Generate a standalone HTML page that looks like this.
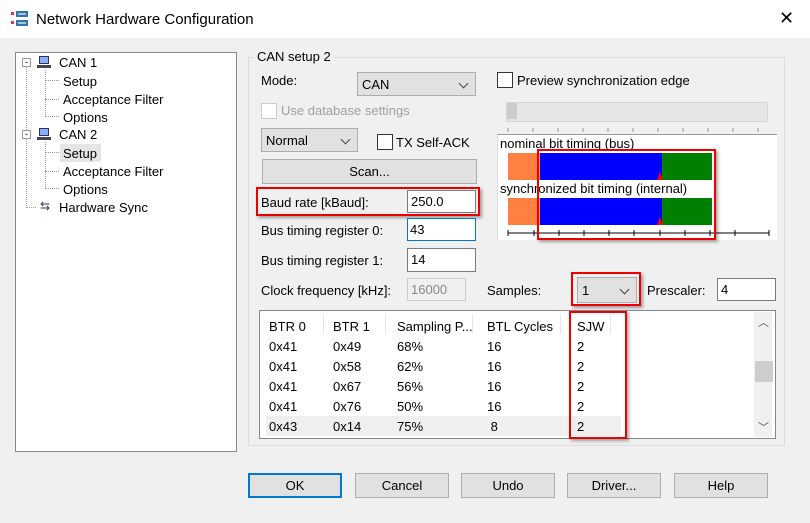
<!DOCTYPE html>
<html><head><style>
*{margin:0;padding:0;box-sizing:border-box}
body{width:810px;height:523px;background:#f0f0f0;font-family:"Liberation Sans",sans-serif;font-size:13px;color:#000;position:relative;overflow:hidden}
.a{position:absolute;white-space:nowrap}
.box{position:absolute;border:1px solid #7a7a7a;background:#fff}
.cb{position:absolute;background:#e1e1e1;border:1px solid #adadad}
.btn{position:absolute;background:#e1e1e1;border:1px solid #adadad;text-align:center;line-height:23px}
.chk{position:absolute;width:16px;height:16px;border:1px solid #333;background:#fff}
.red{position:absolute;border:2px solid #e00;box-shadow:2px 2px 3px rgba(0,0,0,.35)}
.dd{position:absolute;right:8px;top:7px;width:7px;height:7px;border-right:1px solid #444;border-bottom:1px solid #444;transform:rotate(45deg)}
.tl{position:absolute;border-left:1px dotted #999;border-bottom:1px dotted #999}
</style></head><body>
<div class="a" style="left:0;top:0;width:810px;height:38px;background:#fff"></div>
<svg class="a" style="left:10px;top:10px" width="20" height="18"><rect x="6" y="1" width="12" height="6" fill="#3a6fb0"/><rect x="6" y="10" width="12" height="6" fill="#3a6fb0"/><rect x="8" y="3" width="8" height="2" fill="#9cc"/><rect x="8" y="12" width="8" height="2" fill="#9cc"/><rect x="1" y="2" width="3" height="3" fill="#e33"/><rect x="1" y="11" width="3" height="3" fill="#e33"/></svg>
<div class="a" style="left:36px;top:11px;font-size:15px">Network Hardware Configuration</div>
<div class="a" style="left:779px;top:8px;font-size:18px">✕</div>

<div class="box" style="left:15px;top:52px;width:222px;height:400px;border-color:#828790"></div>
<div class="tl" style="left:26px;top:66px;width:1px;height:142px"></div>
<div class="tl" style="left:26px;top:207px;width:10px;height:1px;border-left:0"></div>
<div class="tl" style="left:45px;top:70px;width:14px;height:47px"></div>
<div class="tl" style="left:45px;top:80px;width:14px;height:1px;border-left:0"></div>
<div class="tl" style="left:45px;top:99px;width:14px;height:1px;border-left:0"></div>
<div class="tl" style="left:45px;top:142px;width:14px;height:47px"></div>
<div class="tl" style="left:45px;top:152px;width:14px;height:1px;border-left:0"></div>
<div class="tl" style="left:45px;top:171px;width:14px;height:1px;border-left:0"></div>
<div class="a" style="left:22px;top:58px;width:9px;height:9px;border:1px solid #999;background:#fff;font-size:9px;line-height:6px;text-align:center">-</div>
<div class="a" style="left:22px;top:130px;width:9px;height:9px;border:1px solid #999;background:#fff;font-size:9px;line-height:6px;text-align:center">-</div>
<svg class="a" style="left:36px;top:55px" width="16" height="14"><rect x="3" y="1" width="10" height="8" fill="#335" /><rect x="4" y="2" width="8" height="6" fill="#8af"/><rect x="1" y="10" width="14" height="3" fill="#445"/></svg>
<svg class="a" style="left:36px;top:127px" width="16" height="14"><rect x="3" y="1" width="10" height="8" fill="#335" /><rect x="4" y="2" width="8" height="6" fill="#8af"/><rect x="1" y="10" width="14" height="3" fill="#445"/></svg>
<div class="a" style="left:59px;top:55px">CAN 1</div>
<div class="a" style="left:63px;top:74px">Setup</div>
<div class="a" style="left:63px;top:92px">Acceptance Filter</div>
<div class="a" style="left:63px;top:110px">Options</div>
<div class="a" style="left:59px;top:127px">CAN 2</div>
<div class="a" style="left:60px;top:144px;width:41px;height:18px;background:#e5e5e5"></div>
<div class="a" style="left:63px;top:146px">Setup</div>
<div class="a" style="left:63px;top:164px">Acceptance Filter</div>
<div class="a" style="left:63px;top:182px">Options</div>
<div class="a" style="left:40px;top:199px;color:#335;font-size:12px">⇆</div>
<div class="a" style="left:59px;top:200px">Hardware Sync</div>

<div class="a" style="left:248px;top:57px;width:537px;height:389px;border:1px solid #dcdcdc"></div>
<div class="a" style="left:254px;top:49px;background:#f0f0f0;padding:0 3px">CAN setup 2</div>
<div class="a" style="left:261px;top:73px">Mode:</div>
<div class="cb" style="left:357px;top:72px;width:119px;height:24px"><span class="a" style="left:4px;top:4px">CAN</span><span class="dd"></span></div>
<div class="chk" style="left:261px;top:103px;border-color:#ccc"></div>
<div class="a" style="left:281px;top:103px;color:#a0a0a0">Use database settings</div>
<div class="cb" style="left:261px;top:128px;width:97px;height:24px"><span class="a" style="left:4px;top:4px">Normal</span><span class="dd"></span></div>
<div class="chk" style="left:377px;top:134px"></div>
<div class="a" style="left:396px;top:135px">TX Self-ACK</div>
<div class="btn" style="left:262px;top:159px;width:215px;height:25px">Scan...</div>
<div class="a" style="left:261px;top:195px">Baud rate [kBaud]:</div>
<div class="box" style="left:407px;top:190px;width:69px;height:23px"><span class="a" style="left:3px;top:3px">250.0</span></div>
<div class="red" style="left:256px;top:187px;width:224px;height:29px"></div>
<div class="a" style="left:261px;top:223px">Bus timing register 0:</div>
<div class="box" style="left:407px;top:218px;width:69px;height:23px;border-color:#0078d7"><span class="a" style="left:2px;top:3px">43</span></div>
<div class="a" style="left:261px;top:253px">Bus timing register 1:</div>
<div class="box" style="left:407px;top:248px;width:69px;height:24px"><span class="a" style="left:3px;top:3px">14</span></div>
<div class="a" style="left:261px;top:283px">Clock frequency [kHz]:</div>
<div class="box" style="left:407px;top:278px;width:59px;height:23px;background:#f0f0f0;border-color:#ccc"><span class="a" style="left:3px;top:3px;color:#888">16000</span></div>
<div class="a" style="left:487px;top:283px">Samples:</div>
<div class="cb" style="left:577px;top:277px;width:60px;height:26px"><span class="a" style="left:4px;top:5px">1</span><span class="dd" style="top:8px"></span></div>
<div class="red" style="left:571px;top:272px;width:70px;height:34px"></div>
<div class="a" style="left:647px;top:283px">Prescaler:</div>
<div class="box" style="left:717px;top:278px;width:59px;height:23px"><span class="a" style="left:3px;top:3px">4</span></div>

<div class="chk" style="left:497px;top:72px"></div>
<div class="a" style="left:517px;top:73px">Preview synchronization edge</div>
<div class="a" style="left:506px;top:102px;width:262px;height:20px;background:#e6e6e6;border:1px solid #d6d6d6"></div>
<div class="a" style="left:507px;top:103px;width:10px;height:16px;background:#ccc"></div>
<svg class="a" style="left:497px;top:126px" width="280" height="8"><g stroke="#999"><line x1="11" y1="2" x2="11" y2="6"/><line x1="36" y1="2" x2="36" y2="6"/><line x1="61" y1="2" x2="61" y2="6"/><line x1="86" y1="2" x2="86" y2="6"/><line x1="111" y1="2" x2="111" y2="6"/><line x1="136" y1="2" x2="136" y2="6"/><line x1="161" y1="2" x2="161" y2="6"/><line x1="186" y1="2" x2="186" y2="6"/><line x1="211" y1="2" x2="211" y2="6"/><line x1="236" y1="2" x2="236" y2="6"/><line x1="261" y1="2" x2="261" y2="6"/></g></svg>
<div class="a" style="left:497px;top:134px;width:280px;height:106px;background:#fff;border-top:1px solid #999;border-left:1px solid #ddd"></div>
<div class="a" style="left:500px;top:136px">nominal bit timing (bus)</div>
<div class="a" style="left:508px;top:153px;width:32px;height:27px;background:#ff8040"></div>
<div class="a" style="left:540px;top:153px;width:122px;height:27px;background:#0000ff"></div>
<div class="a" style="left:662px;top:153px;width:50px;height:27px;background:#008000"></div>
<div class="a" style="left:500px;top:181px">synchronized bit timing (internal)</div>
<div class="a" style="left:508px;top:198px;width:32px;height:27px;background:#ff8040"></div>
<div class="a" style="left:540px;top:198px;width:122px;height:27px;background:#0000ff"></div>
<div class="a" style="left:662px;top:198px;width:50px;height:27px;background:#008000"></div>
<svg class="a" style="left:497px;top:165px" width="280" height="75"><polygon points="160,15 166,15 163,7" fill="red"/><polygon points="160,60 166,60 163,52" fill="red"/><g stroke="#000"><line x1="11" y1="68" x2="272" y2="68"/><line x1="11" y1="65" x2="11" y2="71"/><line x1="37" y1="65" x2="37" y2="71"/><line x1="62" y1="65" x2="62" y2="71"/><line x1="87" y1="65" x2="87" y2="71"/><line x1="112" y1="65" x2="112" y2="71"/><line x1="137" y1="65" x2="137" y2="71"/><line x1="163" y1="65" x2="163" y2="71"/><line x1="188" y1="65" x2="188" y2="71"/><line x1="213" y1="65" x2="213" y2="71"/><line x1="238" y1="65" x2="238" y2="71"/><line x1="272" y1="65" x2="272" y2="71"/></g></svg>
<div class="red" style="left:537px;top:149px;width:179px;height:91px"></div>

<div class="box" style="left:259px;top:310px;width:517px;height:129px;border-color:#828790"></div>
<div class="a" style="left:266px;top:416px;width:355px;height:20px;background:#efefef"></div>
<div class="a" style="left:754px;top:312px;width:18px;height:125px;background:#f0f0f0"></div>
<div class="a" style="left:755px;top:361px;width:18px;height:21px;background:#cdcdcd"></div>
<div class="a" style="left:758px;top:314px;color:#555;font-size:11px">︿</div>
<div class="a" style="left:758px;top:419px;color:#555;font-size:11px">﹀</div>
<div class="a" style="left:323px;top:314px;width:1px;height:20px;background:#e5e5e5"></div>
<div class="a" style="left:385px;top:314px;width:1px;height:20px;background:#e5e5e5"></div>
<div class="a" style="left:472px;top:314px;width:1px;height:20px;background:#e5e5e5"></div>
<div class="a" style="left:560px;top:314px;width:1px;height:20px;background:#e5e5e5"></div>
<div class="a" style="left:610px;top:314px;width:1px;height:20px;background:#e5e5e5"></div>
<div class="a" style="left:269px;top:317px;line-height:20px">BTR 0<br>0x41<br>0x41<br>0x41<br>0x41<br>0x43</div>
<div class="a" style="left:333px;top:317px;line-height:20px">BTR 1<br>0x49<br>0x58<br>0x67<br>0x76<br>0x14</div>
<div class="a" style="left:397px;top:317px;line-height:20px">Sampling P...<br>68%<br>62%<br>56%<br>50%<br>75%</div>
<div class="a" style="left:487px;top:317px;line-height:20px">BTL Cycles<br>16<br>16<br>16<br>16<br>&nbsp;8</div>
<div class="a" style="left:577px;top:317px;line-height:20px">SJW<br>2<br>2<br>2<br>2<br>2</div>
<div class="red" style="left:569px;top:311px;width:58px;height:128px"></div>

<div class="btn" style="left:248px;top:473px;width:94px;height:25px;border:2px solid #0078d7;line-height:21px">OK</div>
<div class="btn" style="left:355px;top:473px;width:94px;height:25px">Cancel</div>
<div class="btn" style="left:461px;top:473px;width:94px;height:25px">Undo</div>
<div class="btn" style="left:567px;top:473px;width:94px;height:25px">Driver...</div>
<div class="btn" style="left:674px;top:473px;width:94px;height:25px">Help</div>
</body></html>
